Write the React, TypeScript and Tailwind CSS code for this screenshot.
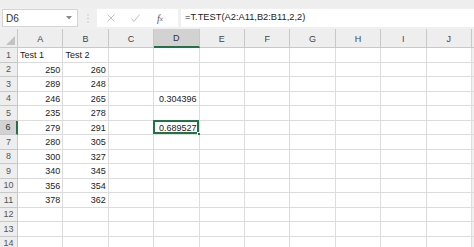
import { ReactNode } from "react";

const colA = [250, 289, 246, 235, 279, 280, 300, 340, 356, 378];
const colB = [260, 248, 265, 278, 291, 305, 327, 345, 354, 362];
const letters = ["A", "B", "C", "D", "E", "F", "G", "H", "I", "J"];

function cellValue(row: number, col: number): { text: string; align: "left" | "right" } | null {
  if (row === 1 && col === 0) return { text: "Test 1", align: "left" };
  if (row === 1 && col === 1) return { text: "Test 2", align: "left" };
  if (row >= 2 && row <= 11 && col === 0) return { text: String(colA[row - 2]), align: "right" };
  if (row >= 2 && row <= 11 && col === 1) return { text: String(colB[row - 2]), align: "right" };
  if (row === 4 && col === 3) return { text: "0.304396", align: "right" };
  if (row === 6 && col === 3) return { text: "0.689527", align: "right" };
  return null;
}

function Cell({ row, col }: { row: number; col: number }) {
  const v = cellValue(row, col);
  const selected = row === 6 && col === 3;
  let inner: ReactNode = null;
  if (v) {
    inner = (
      <span className={`block w-full px-[2px] pt-[1px] leading-[14px] ${v.align === "right" ? "text-right" : "text-left"}`}>
        {v.text}
      </span>
    );
  }
  return (
    <div className="relative flex items-center border-r border-b border-[#dcdcdc] bg-white">
      {inner}
      {selected && (
        <>
          <div className="absolute -left-[1px] -top-[1px] right-0 bottom-0 border-2 border-[#217346]" />
          <div className="absolute -right-[3px] -bottom-[3px] h-[5px] w-[5px] border border-white bg-[#217346]" />
        </>
      )}
    </div>
  );
}

export default function App() {
  const rows = Array.from({ length: 14 }, (_, i) => i + 1);

  return (
    <div className="h-[247px] w-[474px] overflow-hidden bg-[#f0f0f0] font-['Liberation_Sans',Arial,sans-serif] text-[9px] text-[#222]">
      {/* ribbon edge */}
      <div className="h-[8px] bg-[#eeeeee]" />

      {/* formula bar */}
      <div className="flex h-[20px] items-center bg-[#f0f0f0]">
        <div className="ml-[2px] flex h-[18px] w-[76px] items-center justify-between border border-[#d4d4d4] bg-white pl-[3px] pr-[5px] text-[10px] text-[#333]">
          <span>D6</span>
          <svg width="6" height="4" viewBox="0 0 6 4">
            <path d="M0 0h6L3 3.5z" fill="#8a8a8a" />
          </svg>
        </div>
        <div className="flex w-[19px] justify-center">
          <svg width="2" height="9" viewBox="0 0 2 9">
            <circle cx="1" cy="1" r="0.8" fill="#c4c4c4" />
            <circle cx="1" cy="4.5" r="0.8" fill="#c4c4c4" />
            <circle cx="1" cy="8" r="0.8" fill="#c4c4c4" />
          </svg>
        </div>
        <div className="flex h-[18px] w-[81px] items-center bg-white">
          <div className="flex w-[28px] justify-center">
            <svg width="8" height="8" viewBox="0 0 8 8">
              <path d="M0.5 0.5l7 7M7.5 0.5l-7 7" stroke="#c0c0c0" strokeWidth="1" />
            </svg>
          </div>
          <div className="flex w-[20px] justify-center">
            <svg width="9" height="8" viewBox="0 0 9 8">
              <path d="M0.5 4.5l2.5 3 5.5-7" stroke="#c0c0c0" strokeWidth="1" fill="none" />
            </svg>
          </div>
          <div className="flex w-[30px] justify-center font-['Liberation_Serif',serif] text-[10px] italic text-[#555]">
            <span>f</span>
            <span className="mt-[3px] text-[7px]">x</span>
          </div>
        </div>
        <div className="ml-[3px] flex h-[18px] flex-1 items-center bg-white pl-[4px] text-[9.3px] text-[#222]">
          =T.TEST(A2:A11,B2:B11,2,2)
        </div>
      </div>

      {/* sheet */}
      <div className="mt-[1px] grid grid-cols-[18px_repeat(10,45.4px)_1fr] grid-rows-[19px_repeat(14,14.5px)] bg-white">
        <div className="relative border-r border-b border-[#c8c8c8] bg-[#eeeeee]">
          <svg className="absolute right-[2px] bottom-[2px]" width="9" height="9" viewBox="0 0 9 9">
            <path d="M9 0V9H0z" fill="#c2c2c2" />
          </svg>
        </div>
        {letters.map((l) => (
          <div
            key={l}
            className={
              l === "D"
                ? "flex items-center justify-center border-r border-b-2 border-r-[#c8c8c8] border-b-[#217346] bg-[#d2d2d2] pt-[3px] text-[#333]"
                : "flex items-center justify-center border-r border-b border-[#c8c8c8] bg-[#eeeeee] pt-[3px] text-[#444]"
            }
          >
            {l}
          </div>
        ))}
        <div className="border-b border-[#c8c8c8] bg-[#eeeeee]" />

        {rows.map((r) => (
          <RowCells key={r} r={r} />
        ))}
      </div>
    </div>
  );
}

function RowCells({ r }: { r: number }) {
  return (
    <>
      <div
        className={
          r === 6
            ? "flex items-center justify-center border-r-2 border-b border-r-[#217346] border-b-[#c8c8c8] bg-[#d2d2d2] pt-[1px] text-[#333]"
            : "flex items-center justify-center border-r border-b border-[#c8c8c8] bg-[#eeeeee] pt-[1px] text-[#555]"
        }
      >
        {r}
      </div>
      {letters.map((_, c) => (
        <Cell key={c} row={r} col={c} />
      ))}
      <div className="border-b border-[#dcdcdc] bg-[#f0f0f0]" />
    </>
  );
}
